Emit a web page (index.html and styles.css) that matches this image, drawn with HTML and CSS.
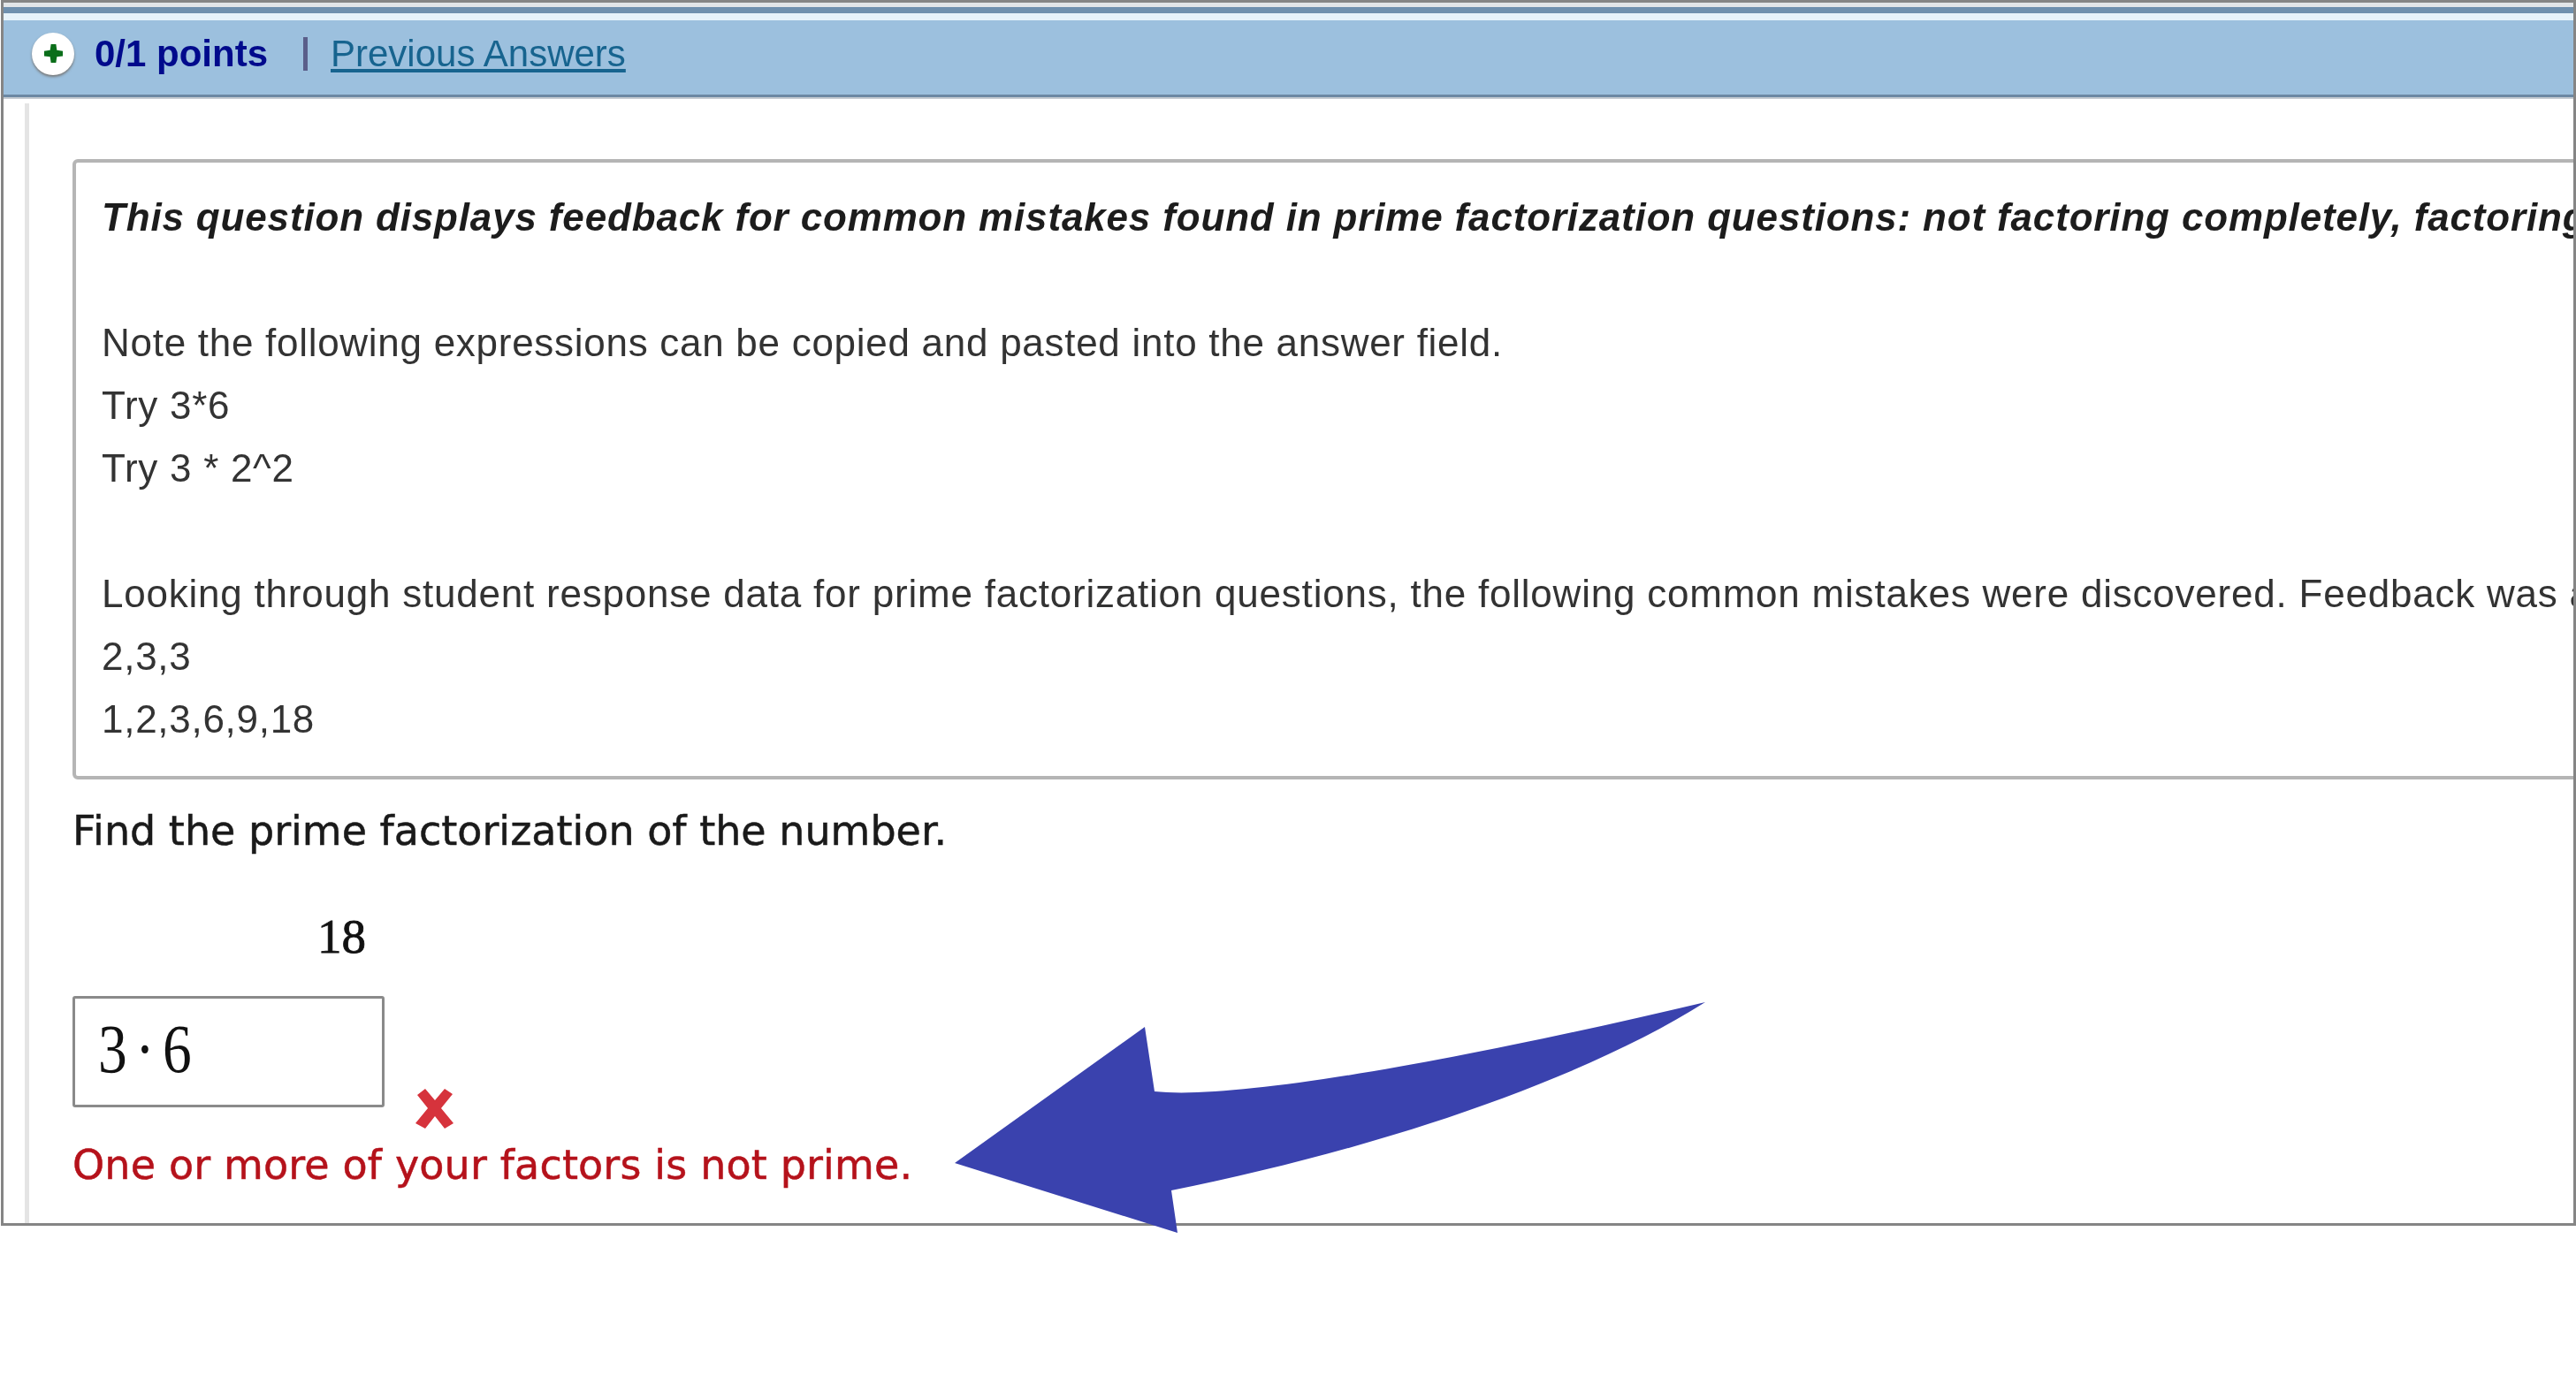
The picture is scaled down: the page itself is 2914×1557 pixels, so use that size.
FILE: index.html
```html
<!DOCTYPE html>
<html lang="en">
<head>
<meta charset="utf-8">
<title>Prime factorization question</title>
<link rel="stylesheet" href="styles.css">
</head>
<body>
<div class="page">
  <section class="frame">
    <header class="band">
      <span class="badge">
        <svg class="plus" viewBox="0 0 24 24"><path d="M9 1h6l1 7 7 1v6l-7 1-1 7H9l-1-7-7-1V9l7-1z"/></svg>
      </span>
      <span class="points">0/1 points</span>
      <span class="sep"></span>
      <a class="prev" href="#">Previous Answers</a>
    </header>
    <div class="content">
      <div class="note">
        <p class="lead">This question displays feedback for common mistakes found in prime factorization questions: not factoring completely, factoring</p>
        <p class="gap">Note the following expressions can be copied and pasted into the answer field.</p>
        <p>Try 3*6</p>
        <p>Try 3 * 2^2</p>
        <p class="gap long">Looking through student response data for prime factorization questions, the following common mistakes were discovered. Feedback was added</p>
        <p>2,3,3</p>
        <p>1,2,3,6,9,18</p>
      </div>
      <p class="prompt">Find the prime factorization of the number.</p>
      <div class="number">18</div>
      <div class="answer-row">
        <div class="answer"><span class="math">3<span class="dot">·</span>6</span></div>
        <svg class="cross" viewBox="0 0 46 45"><path d="M3 7 12 0l11 13L34 0l9 6-13 16 14 17-10 6-11-14-11 14-11-6 14-17z"/></svg>
      </div>
      <p class="error">One or more of your factors is not prime.</p>
    </div>
  </section>
  <svg class="arrow" viewBox="0 0 2914 1557"><path d="M1080 1316 1295 1162 1306 1235C1400 1245 1650 1200 1929 1134C1790 1222 1560 1300 1325 1347L1332 1395z"/></svg>
</div>
</body>
</html>
```
FILE: styles.css
```css
html, body { margin: 0; padding: 0; background: #fff; }
.page { position: relative; width: 2914px; height: 1557px; overflow: hidden; }
.frame {
  box-sizing: border-box;
  width: 2913px;
  height: 1387px;
  margin-left: 1px;
  border: 3px solid #858585;
  overflow: hidden;
  background: #fff;
  font-family: "Liberation Sans", Arial, sans-serif;
  filter: blur(.7px);
}
.band {
  box-sizing: border-box;
  height: 109px;
  display: flex;
  align-items: center;
  padding: 6px 0 0 32px;
  background: linear-gradient(to bottom,
    #e2e5e8 0, #e2e5e8 5px,
    #6f90ae 5px, #6f90ae 12px,
    #e6f2fa 12px, #e6f2fa 20px,
    #9cc0de 20px, #9cc0de 104px,
    #6c88a3 104px, #6c88a3 107px,
    #c6ccd2 107px);
  font-size: 42px;
  white-space: nowrap;
}
.badge {
  width: 48px;
  height: 48px;
  border-radius: 50%;
  background: #fff;
  box-shadow: 0 2px 3px #777;
  display: flex;
  align-items: center;
  justify-content: center;
  margin-right: 23px;
}
.plus { width: 23px; height: 23px; fill: #0b6e1a; }
.points { font-weight: 700; color: #000a8c; width: 196px; }
.sep { width: 5px; height: 38px; background: #5a5e8a; margin: 0 26px 0 40px; }
.prev { color: #17648f; text-decoration: underline; }
.content {
  box-sizing: border-box;
  height: 1270px;
  margin: 5px 0 0 24px;
  border-left: 5px solid #e4e4e4;
  padding: 63px 0 0 49px;
}
.note {
  box-sizing: border-box;
  width: 2900px;
  height: 702px;
  border: 4px solid #b5b5b5;
  border-radius: 6px;
  padding: 26px 0 0 29px;
  font-size: 44px;
  letter-spacing: .72px;
  line-height: 71px;
  color: #333;
  white-space: nowrap;
}
.note p { margin: 0; }
.note .gap { margin-top: 71px; }
.note .long { letter-spacing: .78px; }
.note .lead { font-weight: 700; font-style: italic; color: #1c1c1c; letter-spacing: .84px; }
.prompt, .error {
  margin: 0;
  font-family: "DejaVu Sans", Verdana, sans-serif;
  font-size: 46px;
  line-height: 60px;
  -webkit-text-stroke: .5px;
}
.prompt { color: #1a1a1a; margin-top: 28px; }
.number {
  font-family: "Liberation Serif", serif;
  font-size: 55px;
  line-height: 60px;
  font-weight: 400;
  -webkit-text-stroke: .8px;
  color: #111;
  margin: 60px 0 0 277px;
}
.answer-row { display: flex; align-items: flex-start; margin-top: 37px; }
.answer {
  box-sizing: border-box;
  width: 353px;
  height: 126px;
  border: 3px solid #8a8a8a;
  border-radius: 3px;
  padding: 0 0 6px 26px;
  display: flex;
  align-items: center;
}
.math {
  display: inline-block;
  font-family: "Liberation Serif", serif;
  font-size: 78px;
  color: #111;
  transform: scaleX(.84);
  transform-origin: left center;
}
.dot { margin: 0 11px; }
.cross { width: 46px; height: 45px; margin: 105px 0 -25px 34px; fill: #d6333c; }
.error { color: #b5121b; margin-top: 35px; letter-spacing: .15px; }
.arrow { position: absolute; left: 0; top: 0; width: 2914px; height: 1557px; fill: #3a42ae; pointer-events: none; }
```
